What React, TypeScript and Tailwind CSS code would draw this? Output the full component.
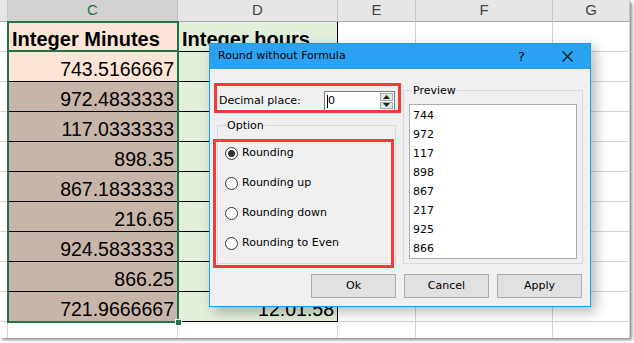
import React from "react";

const minutes = [
  "743.5166667",
  "972.4833333",
  "117.0333333",
  "898.35",
  "867.1833333",
  "216.65",
  "924.5833333",
  "866.25",
  "721.9666667",
];

const preview = ["744", "972", "117", "898", "867", "217", "925", "866"];

const options = ["Rounding", "Rounding up", "Rounding down", "Rounding to Even"];

const cols = ["", "C", "D", "E", "F", "G"];

function Sheet() {
  const rows: React.ReactNode[] = [];

  // column headers
  cols.forEach((c, i) => {
    rows.push(
      <div
        key={`h${i}`}
        className={`flex items-center justify-center border-r border-b text-[15px] ${
          c === "C"
            ? "bg-[#d2d2d2] text-[#217346] border-r-[#c0c0c0] border-b-[#217346]"
            : "bg-[#e6e6e6] text-[#444] border-r-[#c6c6c6] border-b-[#ababab]"
        }`}
      >
        {c}
      </div>
    );
  });

  // title row
  rows.push(<div key="r1a" className="border-r border-b border-[#d4d4d4]" />);
  rows.push(
    <div
      key="r1c"
      className="flex items-end bg-[#fce4d6] pl-[4px] border-r border-b border-black font-bold text-[20px] leading-[24px] text-black whitespace-nowrap overflow-hidden"
    >
      Integer Minutes
    </div>
  );
  rows.push(
    <div
      key="r1d"
      className="flex items-end bg-[#e2efda] pl-[4px] border-r border-b border-black font-bold text-[20px] leading-[24px] text-black whitespace-nowrap overflow-hidden"
    >
      Integer hours
    </div>
  );
  ["e", "f", "g"].forEach((k) =>
    rows.push(<div key={`r1${k}`} className="border-r border-b border-[#d4d4d4]" />)
  );

  minutes.forEach((m, i) => {
    rows.push(<div key={`a${i}`} className="border-r border-b border-[#d4d4d4]" />);
    rows.push(
      <div
        key={`c${i}`}
        className={`flex items-end justify-end pr-[3px] border-r border-b border-black text-[19.5px] leading-[24px] text-black ${
          i === 0 ? "bg-[#fce4d6]" : "bg-[#c8b5a9]"
        }`}
      >
        {m}
      </div>
    );
    rows.push(
      <div
        key={`d${i}`}
        className="flex items-end justify-end pr-[3px] border-r border-b border-black bg-[#e2efda] text-[19.5px] leading-[24px] text-black"
      >
        {i === minutes.length - 1 ? "12:01:58" : ""}
      </div>
    );
    ["e", "f", "g"].forEach((k) =>
      rows.push(<div key={`${k}${i}`} className="border-r border-b border-[#d4d4d4]" />)
    );
  });

  // empty trailing row
  cols.forEach((_, i) =>
    rows.push(<div key={`z${i}`} className="border-r border-b border-[#d4d4d4]" />)
  );

  return (
    <div
      className="grid grid-cols-[8px_170px_160px_78px_137px_77px] grid-rows-[22px_repeat(11,30px)]"
      style={{ fontFamily: '"Liberation Sans", Arial, sans-serif' }}
    >
      {rows}
    </div>
  );
}

function Radio({ checked }: { checked?: boolean }) {
  return (
    <span className="flex h-[13px] w-[13px] items-center justify-center rounded-full border border-[#333] bg-white">
      {checked && <span className="h-[7px] w-[7px] rounded-full bg-[#333]" />}
    </span>
  );
}

function Dialog() {
  return (
    <div
      className="absolute left-[209px] top-[43px] h-[264px] w-[382px] border border-[#1b9bf0] bg-[#f0f0f0] text-[11px] text-black shadow-[5px_5px_12px_rgba(0,0,0,0.28)]"
      style={{ fontFamily: '"DejaVu Sans", Verdana, sans-serif' }}
    >
      <div className="flex h-[25px] items-center bg-[#2ba2f1] pl-[8px] pr-[17px]">
        <span>Round without Formula</span>
        <span className="ml-auto mr-[37px] text-[13px]">?</span>
        <svg width="11" height="11" viewBox="0 0 11 11" className="block">
          <path d="M0.5 0.5 L10.5 10.5 M10.5 0.5 L0.5 10.5" stroke="#111" strokeWidth="1.1" />
        </svg>
      </div>

      <div className="flex gap-[7px] px-[7px]">
        <div className="w-[179px] pt-[22px]">
          <div className="flex h-[20px] items-center">
            <span className="w-[107px] pl-[2px]">Decimal place:</span>
            <div className="flex h-[20px] w-[71px] border border-[#7a7a7a] bg-white">
              <div className="flex flex-1 items-center pl-[2px]">
                <span className="h-[13px] w-px bg-black" />
                <span>0</span>
              </div>
              <div className="my-[1px] mr-[1px] flex w-[13px] flex-col gap-[1px]">
                <div className="flex flex-1 items-center justify-center border border-[#acacac] bg-[#e5e5e5]">
                  <svg width="7" height="4" viewBox="0 0 7 4">
                    <path d="M0 4 L3.5 0 L7 4 Z" fill="#222" />
                  </svg>
                </div>
                <div className="flex flex-1 items-center justify-center border border-[#acacac] bg-[#e5e5e5]">
                  <svg width="7" height="4" viewBox="0 0 7 4">
                    <path d="M0 0 L3.5 4 L7 0 Z" fill="#222" />
                  </svg>
                </div>
              </div>
            </div>
          </div>

          <fieldset className="mt-[8px] h-[145px] border border-[#d9d9d9]">
            <legend className="ml-[8px] px-[1px] leading-[13px]">Option</legend>
            <div className="pt-[6px]">
              {options.map((o, i) => (
                <div key={o} className="flex h-[30px] items-center gap-[4px] pl-[7px]">
                  <Radio checked={i === 0} />
                  <span>{o}</span>
                </div>
              ))}
            </div>
          </fieldset>
        </div>

        <div className="w-[180px] pt-[15px]">
          <fieldset className="h-[180px] border border-[#d9d9d9]">
            <legend className="ml-[8px] px-[1px] leading-[13px]">Preview</legend>
            <div className="mx-[5px] mt-[7px] h-[155px] border border-[#adadad] bg-white pl-[3px] pt-[1px]">
              {preview.map((p, i) => (
                <div key={i} className="leading-[19px]">
                  {p}
                </div>
              ))}
            </div>
          </fieldset>
        </div>
      </div>

      <div className="mt-[10px] flex justify-end gap-[8px] pr-[8px]">
        {["Ok", "Cancel", "Apply"].map((b) => (
          <button
            key={b}
            className="flex h-[24px] w-[85px] items-center justify-center border border-[#adadad] bg-[#e1e1e1]"
          >
            {b}
          </button>
        ))}
      </div>

      <div className="pointer-events-none absolute left-[4px] top-[39px] h-[30px] w-[187px] border-[3px] border-[#f43a3c]" />
      <div className="pointer-events-none absolute left-[3px] top-[95px] h-[129px] w-[181px] border-[3px] border-[#f43a3c]" />
    </div>
  );
}

export default function App() {
  return (
    <div className="h-[343px] w-[634px] bg-white">
      <div className="relative h-[338px] w-[630px] overflow-hidden bg-white shadow-[2px_2px_3px_rgba(0,0,0,0.45)]">
        <Sheet />

        {/* selection outline on column C */}
        <div className="pointer-events-none absolute left-[7px] top-[21px] h-[302px] w-[172px] border-2 border-[#217346]" />
        <div className="pointer-events-none absolute left-[7px] top-[50px] h-[2px] w-[172px] bg-[#217346]" />
        <div className="pointer-events-none absolute left-[175px] top-[319px] h-[7px] w-[7px] border border-white bg-[#217346]" />

        <Dialog />
      </div>
    </div>
  );
}
